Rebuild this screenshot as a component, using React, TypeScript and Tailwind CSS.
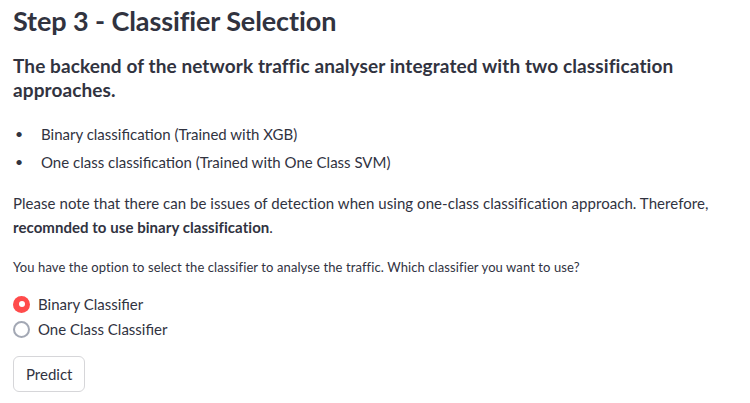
import React, { useState } from "react";

const options = ["Binary Classifier", "One Class Classifier"];

export default function App() {
  const [choice, setChoice] = useState(options[0]);

  return (
    <div
      className="w-[750px] h-[403px] bg-white text-[#31333f] px-[13px] pt-[3px] overflow-hidden"
      style={{ fontFamily: "Lato, 'Open Sans', sans-serif" }}
    >
      <h2 className="text-[27px] font-bold leading-[36px] tracking-[-0.1px]">
        Step 3 - Classifier Selection
      </h2>
      <h3 className="mt-[15px] text-[19px] font-bold leading-[24px] w-[690px] tracking-[0.1px]">
        The backend of the network traffic analyser integrated with two
        classification approaches.
      </h3>
      <ul className="mt-[18px] text-[15px] leading-[28px]">
        <li className="flex items-center">
          <span className="w-[28px] pl-[2px] text-[14px]">•</span>
          Binary classification (Trained with XGB)
        </li>
        <li className="flex items-center">
          <span className="w-[28px] pl-[2px] text-[14px]">•</span>
          One class classification (Trained with One Class SVM)
        </li>
      </ul>
      <p className="mt-[15px] text-[15px] leading-[24px] tracking-[0.05px]">
        Please note that there can be issues of detection when using
        one-class classification approach. Therefore,{" "}
        <strong className="font-bold">
          recomnded to use binary classification
        </strong>
        .
      </p>
      <p className="mt-[19px] text-[13px] leading-[18px] tracking-[0.1px]">
        You have the option to select the classifier to analyse the traffic.
        Which classifier you want to use?
      </p>
      <div className="mt-[18px] flex flex-col gap-[5px]">
        {options.map((o) => (
          <label
            key={o}
            className="flex items-center gap-[8px] text-[15px] leading-[20px] cursor-pointer"
            onClick={() => setChoice(o)}
          >
            <span
              className={`w-[17px] h-[17px] rounded-full flex items-center justify-center ${
                choice === o
                  ? "bg-[#ff4b4b]"
                  : "border-2 border-[#a3a8b4] bg-white"
              }`}
            >
              {choice === o && (
                <span className="w-[6px] h-[6px] rounded-full bg-white" />
              )}
            </span>
            {o}
          </label>
        ))}
      </div>
      <button className="mt-[17px] h-[36px] px-[12px] border border-[#d6d6d9] rounded-[6px] text-[15px] bg-white">
        Predict
      </button>
    </div>
  );
}
